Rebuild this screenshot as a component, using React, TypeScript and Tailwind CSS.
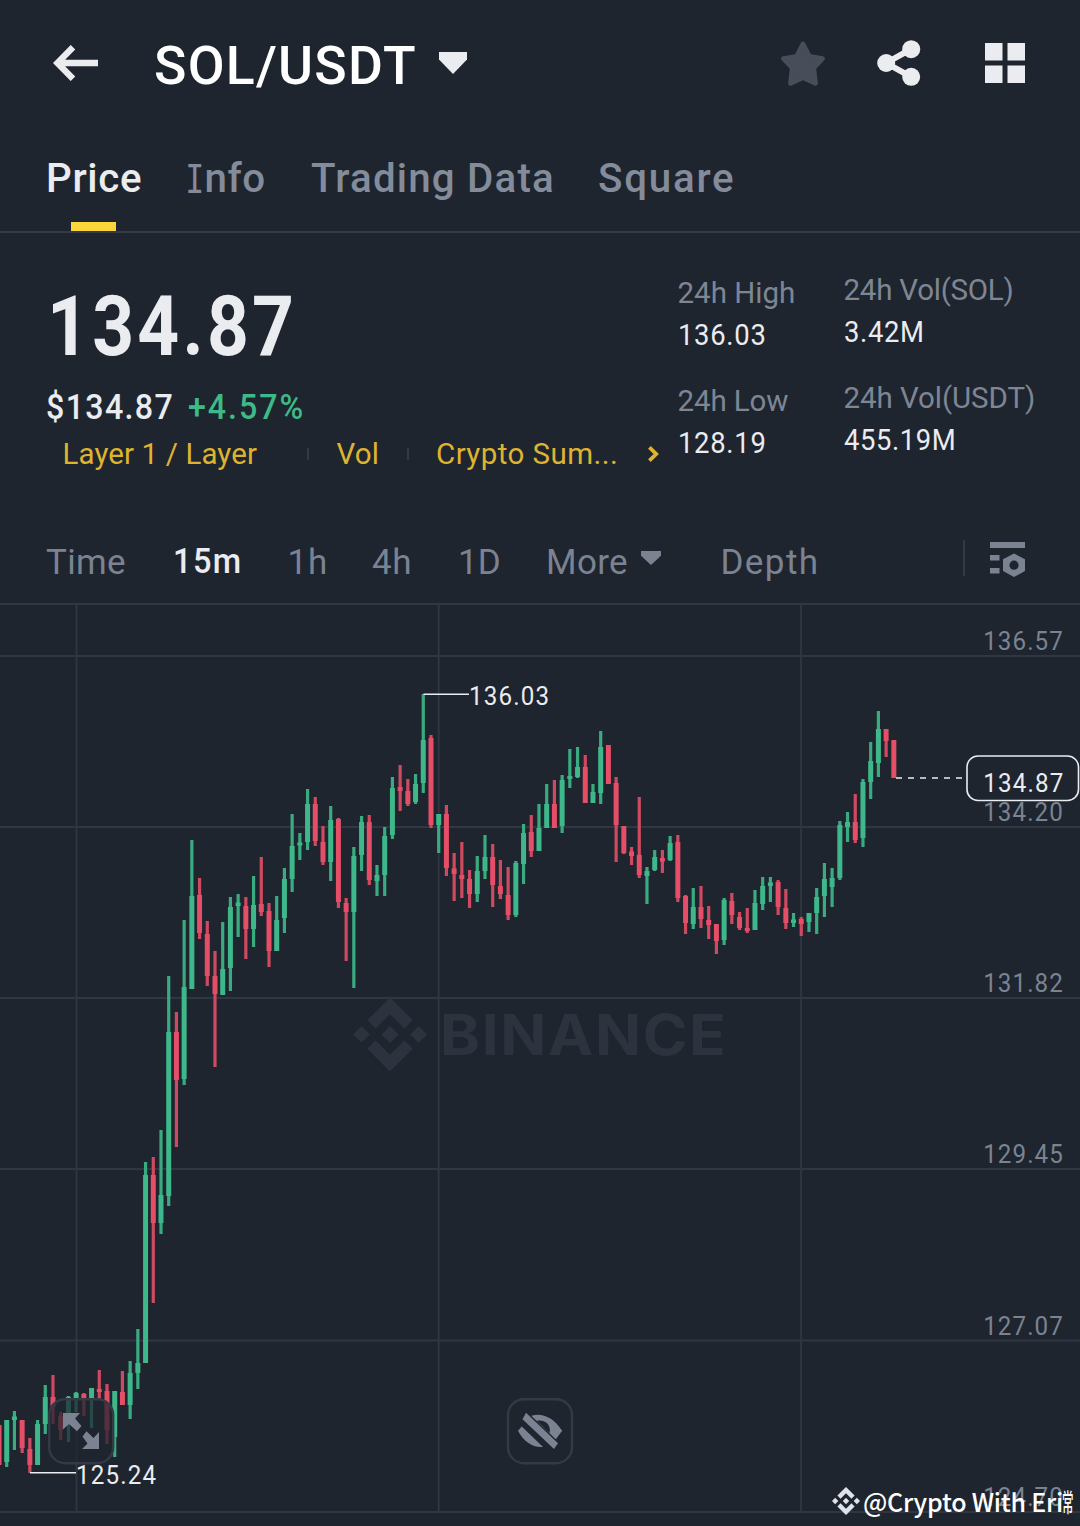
import { Fragment } from "react";

type Candle = [up: 0 | 1, high: number, top: number, bottom: number, low: number];

// Pixel levels of each 15-minute candle: direction, high, body top, body bottom, low.
const CANDLES: Candle[] = [
  [0, 1425, 1425, 1465, 1465], [1, 1420, 1420, 1462, 1467], [1, 1411, 1416.5, 1420, 1450], [0, 1420, 1420, 1448, 1453],
  [0, 1438, 1449, 1465, 1473], [1, 1420, 1424, 1465, 1465], [1, 1385, 1397, 1424, 1434], [0, 1375, 1397, 1407, 1424],
  [0, 1412, 1416, 1430, 1440], [1, 1396, 1397, 1413, 1442], [1, 1392, 1393, 1398, 1412], [0, 1393, 1394, 1399, 1416],
  [1, 1388, 1388, 1399, 1428], [0, 1370, 1389, 1392, 1400], [0, 1384, 1391, 1430, 1444], [1, 1391, 1391, 1437, 1457],
  [0, 1371, 1392, 1405, 1405], [1, 1361, 1373, 1405, 1419], [1, 1329, 1363, 1373, 1389], [1, 1162, 1175, 1363, 1363],
  [0, 1157, 1175, 1223, 1303], [1, 1130, 1195, 1223, 1234], [1, 976, 1032, 1196, 1206], [0, 1012, 1032, 1080, 1147],
  [1, 920, 987, 1079, 1085], [1, 840, 896, 989, 989], [0, 878, 895, 933, 939], [0, 921, 934, 976, 986],
  [0, 951, 976, 994, 1067], [1, 922, 969, 995, 995], [1, 897, 907, 968, 991], [1, 894, 902.5, 906, 937],
  [0, 897, 906, 929, 959], [1, 876, 905, 929, 947], [0, 857, 904, 912, 916], [0, 903, 911, 951, 967],
  [1, 896, 920, 951, 951], [1, 868, 879, 918, 933], [1, 814, 846, 879, 892], [1, 833, 842.5, 845.5, 860],
  [1, 789, 804, 842, 850], [0, 797, 804, 841, 846], [0, 826, 842, 862, 865], [1, 806, 820, 862, 881],
  [0, 818, 819, 902, 908], [0, 898, 903, 912, 961], [1, 847, 856, 912, 988], [1, 816, 822, 855, 871],
  [0, 815, 822, 880, 885], [1, 865, 875, 881, 896], [1, 827, 836, 875, 896], [1, 777, 788, 835, 839],
  [0, 765, 787, 791, 811], [0, 779, 791, 804, 806], [1, 774, 784, 802, 804], [1, 694, 740, 783, 793],
  [0, 735, 738, 825, 828], [1, 814, 814, 825, 853], [0, 805, 814, 868, 876], [0, 853, 868.5, 874, 901],
  [0, 842, 875, 879, 898], [0, 870, 879, 894, 908], [1, 856, 871, 894, 902], [1, 835, 857, 871, 879],
  [0, 844, 857, 885, 907], [0, 860, 886, 894, 899], [0, 867, 895, 915, 920], [1, 861, 863, 915, 917],
  [1, 824, 833, 864, 884], [0, 815, 832, 851, 857], [1, 804, 828, 851, 851], [1, 784, 804, 828, 828],
  [0, 780, 804, 828, 828], [1, 775, 780, 826, 833], [1, 749, 776, 779, 788], [1, 747, 767, 777, 778],
  [0, 755, 767, 803, 803], [1, 784, 792, 803, 803], [1, 731, 747, 793, 804], [0, 745, 745, 784, 784],
  [0, 777, 783, 825, 862], [0, 826, 826, 853, 854], [0, 847, 851.5, 856, 865], [0, 797, 855, 875, 878],
  [1, 867, 871, 876, 904], [1, 850, 857, 870, 871], [0, 850, 858, 861.5, 873], [1, 836, 843, 860, 861],
  [0, 835, 842, 898, 902], [0, 895, 896, 923, 934], [1, 888, 907, 924, 929], [0, 886, 907, 919, 928],
  [0, 906, 920, 925, 939], [0, 924, 924, 941, 954], [1, 898, 900, 940, 945], [0, 893, 901, 915, 924],
  [0, 912, 917, 928, 930], [0, 908, 928, 931, 933], [1, 890, 903, 930, 930], [1, 877, 886, 904, 910],
  [1, 877, 882.5, 886, 902], [0, 880, 882, 907, 915], [0, 889, 908, 923, 929], [1, 913, 919.5, 923, 927],
  [0, 917, 919, 924, 936], [1, 913, 913, 922, 932], [1, 888, 897, 913, 934], [1, 863, 879, 896, 917],
  [1, 868, 878, 887, 907], [1, 821, 825, 878, 880], [1, 812, 822, 827, 842], [0, 794, 822, 840, 843],
  [1, 779, 782, 838, 847], [1, 742, 761, 782, 799], [1, 711, 729, 763, 777], [0, 729, 729, 741, 757],
  [0, 740, 740, 778, 778],
];
const STEP = 7.714;

const PRICE_AXIS: [string, number][] = [
  ["136.57", 650], ["134.20", 821], ["131.82", 992], ["129.45", 1163], ["127.07", 1335], ["124.70", 1506],
];
const H_LINES = [656, 827, 998, 1169, 1340.5, 1512];
const V_LINES = [76.5, 438.7, 801];

function Caret({ className }: { className: string }) {
  return (
    <svg viewBox="0 0 28 22" className={className} fill="currentColor" preserveAspectRatio="none">
      <path d="M0 0H28V7.5L14 22L0 7.5Z" />
    </svg>
  );
}

// Five-part diamond mark, drawn on a 126-unit grid.
const MARK =
  "M38.7 53.2l24.6-24.6 24.6 24.6 14.3-14.3L63.3 0 24.4 38.9zM0 63.3L14.3 49l14.3 14.3-14.3 14.3zM38.7 73.4l24.6 24.6 24.6-24.6 14.3 14.3-38.9 38.9-38.9-38.9zM98 63.3L112.3 49l14.3 14.3-14.3 14.3zM77.8 63.3L63.3 48.8 48.8 63.3l14.5 14.5z";

function Header() {
  return (
    <header className="flex h-[126px] items-center text-[#eaecf0]">
      <svg viewBox="0 0 45 36" className="ml-[53px] h-9 w-[45px] shrink-0" fill="none" stroke="currentColor" strokeWidth="6.4">
        <path d="M45 18H5M20 2.2L4.4 18L20 33.8" />
      </svg>
      <h1 className="ml-[56px] w-[262px] shrink-0 pt-[5px] text-[53.5px] leading-none font-medium tracking-[1.27px] text-white">SOL/USDT</h1>
      <Caret className="ml-[23px] h-[22px] w-7 shrink-0" />
      <svg viewBox="0 0 44 46" className="ml-[314px] h-[46px] w-11 shrink-0 text-[#474d59]" fill="currentColor" stroke="currentColor" strokeWidth="5" strokeLinejoin="round">
        <path d="M22 4L28.2 16.4L41.4 18.6L32.6 28L34.4 43.2L22 37.4L9.6 43.2L11.4 28L2.6 18.6L15.8 16.4Z" />
      </svg>
      <svg viewBox="0 0 44 46" className="ml-[52px] h-[46px] w-11 shrink-0" fill="currentColor">
        <path d="M34 9.2L9.3 23L34 36.8" fill="none" stroke="currentColor" strokeWidth="6" />
        <circle cx="34.2" cy="9.2" r="9" />
        <circle cx="9.2" cy="23" r="9" />
        <circle cx="34.2" cy="36.8" r="9" />
      </svg>
      <svg viewBox="0 0 40 40" className="ml-16 size-10 shrink-0" fill="currentColor">
        <path d="M0 0H17.5V17.5H0ZM22.5 0H40V17.5H22.5ZM0 22.5H17.5V40H0ZM22.5 22.5H40V40H22.5Z" />
      </svg>
    </header>
  );
}

function Tabs() {
  return (
    <nav className="flex h-[107px] border-b-2 border-[#333a45] pt-[29px] text-[40.3px] leading-[48px] font-medium whitespace-nowrap text-[#848c9b]">
      <div className="ml-[46px] flex w-24 flex-col text-[#eaecf0]">
        <span className="tracking-[0.68px]">Price</span>
        <span className="mt-[19px] ml-[25px] h-[9px] w-[45px] bg-[#fcd53a]" />
      </div>
      <div className="ml-[43px] flex w-[84px]">
        <span className="flex w-[19.5px] justify-center">
          <span className="scale-x-80 font-['DejaVu_Sans_Mono',monospace] text-[39.4px]">I</span>
        </span>
        <span className="tracking-[0.6px]">nfo</span>
      </div>
      <span className="ml-[42px] w-[244px] tracking-[1.17px]">Trading Data</span>
      <span className="ml-[43px] tracking-[1.76px]">Square</span>
    </nav>
  );
}

function Stat({ label, value, labelClass, valueClass }: { label: string; value: string; labelClass: string; valueClass: string }) {
  return (
    <div className="h-[108px] text-[29.5px] leading-9 whitespace-nowrap">
      <div className={"text-[#7e8694] " + labelClass}>{label}</div>
      <div className={"mt-[5.5px] origin-left scale-x-93 text-[#eaecf0] " + valueClass}>{value}</div>
    </div>
  );
}

function Summary() {
  return (
    <section className="flex h-[287px]">
      <div className="w-[677.5px] shrink-0 pt-[52px] whitespace-nowrap">
        <div className="ml-[47px] origin-left scale-x-88 text-[83px] leading-[84px] font-bold tracking-[3.7px] text-[#eaecf0]">134.87</div>
        <div className="mt-[19px] ml-[45.5px] flex text-[35px] leading-10 font-medium">
          <span className="w-[142px] origin-left scale-x-92 tracking-[1.45px] text-[#eaecf0]">$134.87</span>
          <span className="origin-left scale-x-92 tracking-[2.1px] text-[#3dba87]">+4.57%</span>
        </div>
        <div className="mt-[8px] ml-[62.5px] flex items-center text-[29.5px] leading-9 text-[#deb42f]">
          <span className="w-[244px] tracking-[0.11px]">Layer 1 / Layer</span>
          <span className="h-3 w-[2px] bg-[#333a45]" />
          <span className="ml-[28px] w-[70px] tracking-[0.2px]">Vol</span>
          <span className="h-3 w-[2px] bg-[#333a45]" />
          <span className="ml-[27.5px] w-[212px] tracking-[0.44px]">Crypto Sum...</span>
          <svg viewBox="0 0 11 16" className="mb-px h-4 w-[11px]" fill="none" stroke="currentColor" strokeWidth="3.8">
            <path d="M1.4 1.4L8.2 8L1.4 14.6" />
          </svg>
        </div>
      </div>
      <div className="w-[166px] shrink-0 pt-[42px]">
        <Stat label="24h High" value="136.03" labelClass="tracking-normal" valueClass="tracking-[0.75px]" />
        <Stat label="24h Low" value="128.19" labelClass="tracking-[-0.1px]" valueClass="tracking-[0.75px]" />
      </div>
      <div className="pt-[39px]">
        <Stat label="24h Vol(SOL)" value="3.42M" labelClass="tracking-[-0.24px]" valueClass="tracking-[0.7px]" />
        <Stat label="24h Vol(USDT)" value="455.19M" labelClass="tracking-[-0.05px]" valueClass="tracking-[0.6px]" />
      </div>
    </section>
  );
}

function Intervals() {
  return (
    <div className="flex h-[83px] items-center text-[35px] leading-10 whitespace-nowrap text-[#7b8392]">
      <span className="ml-[46px] w-[126.5px] pt-[2px] tracking-[0.3px]">Time</span>
      <span className="w-[115px] origin-left scale-x-93 font-medium tracking-[1.5px] text-[#eaecf0]">15m</span>
      <span className="w-[84.5px] pt-[2px] tracking-[0.83px]">1h</span>
      <span className="w-[86px] pt-[2px] tracking-[0.6px]">4h</span>
      <span className="w-[88px] pt-[2px] tracking-[0.1px]">1D</span>
      <span className="w-[95px] pt-[2px] tracking-[0.32px]">More</span>
      <Caret className="mb-[7px] h-[14px] w-5" />
      <span className="ml-[59.5px] w-[242.5px] pt-[2px] tracking-[1.4px]">Depth</span>
      <span className="mb-[7px] h-9 w-[2px] bg-[#333a45]" />
      <svg viewBox="0 0 36 36" className="mb-[5px] ml-[25px] size-9" fill="currentColor">
        <path d="M0 1H35V7H0ZM0 14H9.5V19.6H0ZM0 27H9.5V32.6H0Z" />
        <path fillRule="evenodd" d="M24 12.4L35 18.3V30L24 36L13 30V18.3ZM24 19.6A4.6 4.6 0 1 0 24 28.8A4.6 4.6 0 1 0 24 19.6Z" />
      </svg>
    </div>
  );
}

function Chart() {
  return (
    <div className="relative h-[923px]">
      <svg viewBox="0 603 1080 923" className="block h-[923px] w-[1080px]" fontFamily="Roboto, sans-serif" fontSize="26">
        <g stroke="#303742" strokeWidth="1.8">
          <line x1="0" x2="1080" y1="604" y2="604" strokeWidth="2" />
          {H_LINES.map((y) => <line key={y} x1="0" x2="1080" y1={y} y2={y} />)}
          {V_LINES.map((x) => <line key={x} x1={x} x2={x} y1="604" y2="1512" />)}
        </g>
        <g fill="#2c333e">
          <path d={MARK} transform="translate(353 997.5) scale(.5845)" />
          <text x="440" y="1055" fontFamily="Inter, sans-serif" fontWeight="700" fontSize="56" textLength="287.5" lengthAdjust="spacingAndGlyphs" letterSpacing="1.5">BINANCE</text>
        </g>
        {CANDLES.map(([up, high, top, bottom, low], i) => {
          const x = -1 + i * STEP;
          return (
            <Fragment key={i}>
              <rect x={x - 1.6} y={high} width="3.2" height={low - high} fill={up ? "#3aab80" : "#cf4a61"} />
              <rect x={x - 2.5} y={top} width="5" height={bottom - top} fill={up ? "#3eb78a" : "#e54e67"} />
            </Fragment>
          );
        })}
        <g fill="#7b8391">
          {PRICE_AXIS.map(([label, y]) => (
            <text key={label} transform={`translate(983.2 ${y}) scale(.93 1)`} letterSpacing="1.15">{label}</text>
          ))}
        </g>
        <g stroke="#eaecf0" strokeWidth="1.6" fill="none">
          <path d="M423.5 694.3H469" />
          <path d="M30 1472.8H76" />
          <path d="M896 778H966" strokeDasharray="6 6" />
          <rect x="967" y="756" width="111.5" height="44.5" rx="11" fill="#1e252f" />
        </g>
        <g fill="#eaecf0" letterSpacing="1.25">
          <text transform="translate(469 705) scale(.93 1)">136.03</text>
          <text transform="translate(76 1484) scale(.93 1)">125.24</text>
          <text transform="translate(983.2 792) scale(.93 1)">134.87</text>
        </g>
        <g stroke="#333a45" strokeWidth="2.4" fill="#1e252f" fillOpacity="0.72">
          <rect x="49.2" y="1399.2" width="64" height="64" rx="16" />
          <rect x="508" y="1399.2" width="64" height="64" rx="16" />
        </g>
        <g fill="#7b8392">
          <path d="M63 1413H80L75 1418.5L81.5 1426L77 1431.3L69 1424L63 1429.5Z" />
          <path d="M99 1449H82L87.5 1443.5L82.5 1436.5L86.5 1431.3L93.5 1438L99 1432Z" />
          <path d="M526 1412.7L558 1443.3L554 1449L522.5 1419.3Z" />
          <path fillRule="evenodd" d="M531.5 1415.8C541 1412.5 553 1416.5 562.2 1430.8L555.8 1439.2L531.5 1416ZM536.8 1420.8L549.6 1433C551.5 1425 545 1419.2 536.8 1420.8Z" />
          <path d="M518 1430.8L521.8 1426.6L543 1446.9C533 1448 524 1442 518 1430.8Z" />
        </g>
      </svg>
      <div className="absolute top-[880px] left-[832px] flex items-center whitespace-nowrap text-white">
        <svg viewBox="0 0 126.6 126.6" className="size-7 shrink-0 text-[#dfe2e8]" fill="currentColor">
          <path d={MARK} />
        </svg>
        <span className="ml-[3px] w-[199px] font-['Noto_Sans_CJK_SC',sans-serif] text-[25px] leading-[36px] font-medium tracking-[-0.22px]">@Crypto With Eri</span>
        <span className="w-3 origin-left scale-x-46 font-['Noto_Sans_CJK_SC',sans-serif] text-[25px] leading-[36px] font-medium">常</span>
      </div>
    </div>
  );
}

export default function App() {
  return (
    <main className="h-[1526px] w-[1080px] overflow-hidden bg-[#1e252f] font-['Roboto',sans-serif]">
      <Header />
      <Tabs />
      <Summary />
      <Intervals />
      <Chart />
    </main>
  );
}
